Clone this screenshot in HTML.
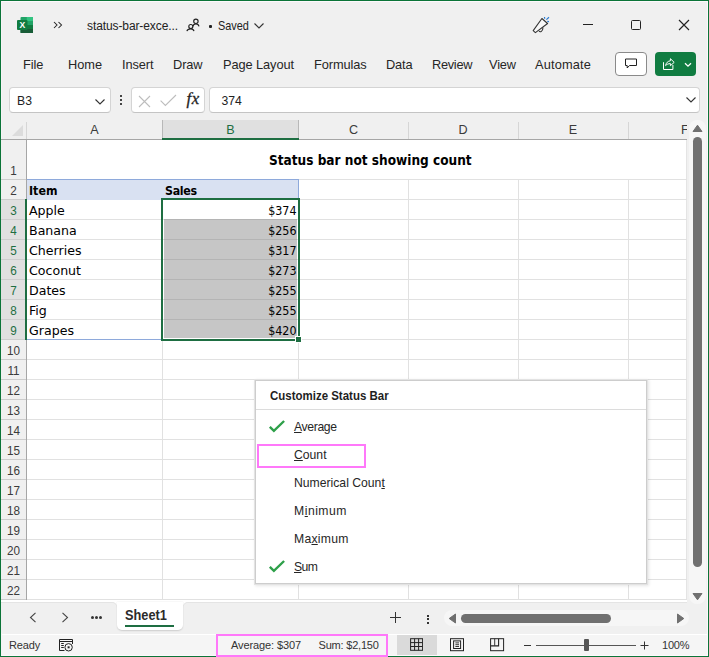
<!DOCTYPE html>
<html lang="en"><head><meta charset="utf-8"><title>status-bar-excel</title>
<style>
*{box-sizing:border-box;margin:0;padding:0}
html,body{width:709px;height:657px;overflow:hidden;background:#f0f0f0}
body{position:relative;font-family:"Liberation Sans",sans-serif;font-size:13px;color:#242424}
.a{position:absolute}
.t{position:absolute;white-space:nowrap;line-height:16px}
.hl{position:absolute;height:1px;background:#e1e1e1}
.vl{position:absolute;width:1px;background:#e1e1e1}
u{text-decoration:underline;text-underline-offset:0.5px;text-decoration-thickness:1px}
</style></head><body>

<div class="a" style="left:0;top:0;width:709px;height:657px;border:1px solid #0b7438;"></div>
<div class="a" style="left:1px;top:1px;width:707px;height:655px;border:1px solid #fdf9fc;border-left-color:#f6f3f6"></div>
<svg class="a" style="left:17px;top:16px" width="17" height="18" viewBox="0 0 17 18">
<rect x="3.5" y="1" width="12.5" height="16" rx="1" fill="#21a366"/>
<rect x="9.75" y="1" width="6.25" height="4" fill="#33c481"/>
<rect x="3.5" y="5" width="6.25" height="4" fill="#107c41"/>
<rect x="9.75" y="5" width="6.25" height="4" fill="#21a366"/>
<rect x="3.5" y="9" width="6.25" height="4" fill="#0e6e3a"/>
<rect x="9.75" y="9" width="6.25" height="4" fill="#107c41"/>
<rect x="3.5" y="13" width="12.5" height="4" fill="#185c37"/>
<rect x="0" y="4" width="10.5" height="10" rx="1" fill="#107c41"/>
<text x="5.3" y="12.1" font-family="Liberation Sans, sans-serif" font-weight="bold" font-size="8.6" fill="#fff" text-anchor="middle">X</text>
</svg>
<svg class="a" style="left:53px;top:21px" width="10" height="8" viewBox="0 0 10 8"><path d="M1 1 L4 4 L1 7 M5.5 1 L8.5 4 L5.5 7" stroke="#222" stroke-width="1.05" fill="none"/></svg>
<div class="t" style="top:18px;font-size:12px;color:#222;letter-spacing:-0.1px;left:87px;">status-bar-exce...</div>
<svg class="a" style="left:180px;top:10px" width="30" height="30" viewBox="0 0 30 30" fill="none" stroke="#222" stroke-width="1.15">
<circle cx="15.9" cy="11.3" r="2.2"/><path d="M13 16.4 C13.3 14.6 14.5 13.8 15.9 13.8 C17.4 13.8 18.6 14.6 19 16.4"/>
<circle cx="10.8" cy="16.5" r="2"/><path d="M6.9 21.2 C7.3 19.5 8.8 18.8 10.8 18.8 C12.6 18.8 13.6 19.6 14 21.2"/>
</svg>
<div class="a" style="left:209px;top:25px;width:3px;height:3px;background:#222;border-radius:1px"></div>
<div class="t" style="top:18px;font-size:12.4px;color:#222;left:218px;transform:scaleX(.88);transform-origin:0 0;">Saved</div>
<svg class="a" style="left:252.5px;top:21.5px" width="12" height="8" viewBox="0 0 12 8"><path d="M1.5 1.5 L6 6 L10.5 1.5" stroke="#333" stroke-width="1.1" fill="none"/></svg>
<svg class="a" style="left:525px;top:10px" width="40" height="30" viewBox="0 0 40 30" fill="none">
<path d="M8.2 20.6 L16.9 8.5 L22.6 13.5 L10.4 22.6 Z" stroke="#333" stroke-width="1.1" stroke-linejoin="round" fill="#f8f8f8"/>
<path d="M14.1 21 C14.8 22.3 17.8 22.2 18 17.4" stroke="#333" stroke-width="1.1"/>
<path d="M19.5 7 L19.7 8.7 M21.4 9.6 L24 7.2 M22.3 11.3 L24 11.6" stroke="#2b7cd3" stroke-width="1.2"/>
</svg>
<div class="a" style="left:583px;top:24px;width:10px;height:1px;background:#222"></div>
<div class="a" style="left:631px;top:20px;width:10px;height:10px;border:1px solid #222;border-radius:1.5px"></div>
<svg class="a" style="left:678px;top:19px" width="12" height="12" viewBox="0 0 12 12"><path d="M1 1 L11 11 M11 1 L1 11" stroke="#222" stroke-width="1.15"/></svg>
<div class="t" style="top:57px;font-size:12.8px;color:#262626;letter-spacing:-0.1px;left:23px;">File</div>
<div class="t" style="top:57px;font-size:12.8px;color:#262626;letter-spacing:0px;left:68px;">Home</div>
<div class="t" style="top:57px;font-size:12.8px;color:#262626;letter-spacing:-0.1px;left:122px;">Insert</div>
<div class="t" style="top:57px;font-size:12.8px;color:#262626;letter-spacing:-0.1px;left:173px;">Draw</div>
<div class="t" style="top:57px;font-size:12.8px;color:#262626;letter-spacing:-0.08px;left:223px;">Page Layout</div>
<div class="t" style="top:57px;font-size:12.8px;color:#262626;letter-spacing:-0.1px;left:314px;">Formulas</div>
<div class="t" style="top:57px;font-size:12.8px;color:#262626;letter-spacing:-0.15px;left:386px;">Data</div>
<div class="t" style="top:57px;font-size:12.8px;color:#262626;letter-spacing:-0.3px;left:432px;">Review</div>
<div class="t" style="top:57px;font-size:12.8px;color:#262626;letter-spacing:-0.15px;left:489px;">View</div>
<div class="t" style="top:57px;font-size:12.8px;color:#262626;letter-spacing:0.15px;left:535px;">Automate</div>
<div class="a" style="left:615px;top:52px;width:32px;height:24px;border:1px solid #8a8a8a;border-radius:4px;background:#fff"></div>
<svg class="a" style="left:624px;top:58px" width="14" height="12" viewBox="0 0 14 12"><path d="M1.5 1 H12.5 V7.5 H5.5 L3.2 10 V7.5 H1.5 Z" stroke="#222" stroke-width="1" fill="none"/></svg>
<div class="a" style="left:655px;top:52px;width:41px;height:24px;border-radius:4px;background:#107c41"></div>
<svg class="a" style="left:661px;top:57px" width="14" height="14" viewBox="0 0 14 14" fill="none" stroke="#fff" stroke-width="1">
<path d="M2.5 5.2 V12.5 H11.9 V8"/><path d="M4.6 8.6 C5 5.8 7 4 9.4 3.8 V1.7 L13.2 5.4 L9.4 8.7 V6.6 C7.4 6.6 5.8 7.3 4.6 8.6 Z" stroke-linejoin="round"/></svg>
<svg class="a" style="left:683.5px;top:61.8px" width="8" height="6" viewBox="0 0 8 6"><path d="M1 1.2 L4 4.2 L7 1.2" stroke="#fff" stroke-width="1.3" fill="none"/></svg>
<div class="a" style="left:9px;top:87px;width:102px;height:26px;border:1px solid #d4d4d4;border-bottom-color:#c4c4c4;border-radius:4px;background:#fff"></div>
<div class="t" style="top:93px;font-size:12.2px;color:#222;left:17px;">B3</div>
<svg class="a" style="left:94px;top:98px" width="12" height="8" viewBox="0 0 12 8"><path d="M1.5 1.5 L6 6 L10.5 1.5" stroke="#333" stroke-width="1.1" fill="none"/></svg>
<div class="a" style="left:120px;top:95px;width:2px;height:2px;background:#444"></div>
<div class="a" style="left:120px;top:99px;width:2px;height:2px;background:#444"></div>
<div class="a" style="left:120px;top:103px;width:2px;height:2px;background:#444"></div>
<div class="a" style="left:131px;top:87px;width:74px;height:26px;border:1px solid #d4d4d4;border-bottom-color:#c4c4c4;border-radius:4px;background:#fff"></div>
<svg class="a" style="left:137.5px;top:94.5px" width="13" height="13" viewBox="0 0 13 13"><path d="M1 1 L12 12 M12 1 L1 12" stroke="#bdbdbd" stroke-width="1.1"/></svg>
<svg class="a" style="left:160px;top:93.5px" width="17" height="13" viewBox="0 0 17 13"><path d="M0.6 6.6 L5.4 11.4 L16 1" stroke="#bdbdbd" stroke-width="1.1" fill="none"/></svg>
<div class="t" style="top:91px;font-size:16.8px;color:#222;font-family:'Liberation Serif',serif;letter-spacing:0.6px;left:186.5px;font-style:italic;-webkit-text-stroke:0.3px #222;">fx</div>
<div class="a" style="left:209px;top:87px;width:491px;height:26px;border:1px solid #d4d4d4;border-bottom-color:#c4c4c4;border-radius:4px;background:#fff"></div>
<div class="t" style="top:93px;font-size:12.2px;color:#222;left:221.5px;">374</div>
<svg class="a" style="left:685px;top:96px" width="12" height="8" viewBox="0 0 12 8"><path d="M1.5 1.5 L6 6 L10.5 1.5" stroke="#333" stroke-width="1.1" fill="none"/></svg>
<div class="a" style="left:27px;top:140px;width:660px;height:461px;background:#fff;border-right:1px solid #e4e4e4"></div>
<svg class="a" style="left:11px;top:124px" width="13" height="13" viewBox="0 0 13 13"><path d="M12 1 V12 H1 Z" fill="#dcdcdc"/></svg>
<div class="a" style="left:162px;top:120px;width:137px;height:20px;background:#e0e0e0"></div>
<div class="t" style="top:122px;font-size:12.6px;color:#3b3b3b;left:27px;width:135px;text-align:center;">A</div>
<div class="t" style="top:122px;font-size:12.6px;color:#1e6e42;left:162px;width:137px;text-align:center;">B</div>
<div class="t" style="top:122px;font-size:12.6px;color:#3b3b3b;left:299px;width:109px;text-align:center;">C</div>
<div class="t" style="top:122px;font-size:12.6px;color:#3b3b3b;left:408px;width:110px;text-align:center;">D</div>
<div class="t" style="top:122px;font-size:12.6px;color:#3b3b3b;left:518px;width:110px;text-align:center;">E</div>
<div class="t" style="top:122px;font-size:12.6px;color:#3b3b3b;left:681px;width:6px;overflow:hidden;">F</div>
<div class="vl" style="left:26px;top:122px;height:17px;background:#d6d6d6"></div>
<div class="vl" style="left:162px;top:120px;height:19px;background:#b8b8b8"></div>
<div class="vl" style="left:298px;top:120px;height:19px;background:#b8b8b8"></div>
<div class="vl" style="left:408px;top:122px;height:17px;background:#d6d6d6"></div>
<div class="vl" style="left:518px;top:122px;height:17px;background:#d6d6d6"></div>
<div class="vl" style="left:628px;top:122px;height:17px;background:#d6d6d6"></div>
<div class="a" style="left:1px;top:139px;width:686px;height:1px;background:#a6a6a6"></div>
<div class="a" style="left:162px;top:138px;width:137px;height:2px;background:#1e6e42"></div>
<div class="a" style="left:1px;top:140px;width:25px;height:461px;background:#f0f0f0"></div>
<div class="a" style="left:1px;top:200px;width:25px;height:140px;background:#e0e0e0"></div>
<div class="hl" style="left:1px;top:179px;width:25px;background:#cdcdcd"></div>
<div class="hl" style="left:1px;top:199px;width:25px;background:#cdcdcd"></div>
<div class="hl" style="left:1px;top:219px;width:25px;background:#cdcdcd"></div>
<div class="hl" style="left:1px;top:239px;width:25px;background:#cdcdcd"></div>
<div class="hl" style="left:1px;top:259px;width:25px;background:#cdcdcd"></div>
<div class="hl" style="left:1px;top:279px;width:25px;background:#cdcdcd"></div>
<div class="hl" style="left:1px;top:299px;width:25px;background:#cdcdcd"></div>
<div class="hl" style="left:1px;top:319px;width:25px;background:#cdcdcd"></div>
<div class="hl" style="left:1px;top:339px;width:25px;background:#cdcdcd"></div>
<div class="hl" style="left:1px;top:359px;width:25px;background:#cdcdcd"></div>
<div class="hl" style="left:1px;top:379px;width:25px;background:#cdcdcd"></div>
<div class="hl" style="left:1px;top:399px;width:25px;background:#cdcdcd"></div>
<div class="hl" style="left:1px;top:419px;width:25px;background:#cdcdcd"></div>
<div class="hl" style="left:1px;top:439px;width:25px;background:#cdcdcd"></div>
<div class="hl" style="left:1px;top:459px;width:25px;background:#cdcdcd"></div>
<div class="hl" style="left:1px;top:479px;width:25px;background:#cdcdcd"></div>
<div class="hl" style="left:1px;top:499px;width:25px;background:#cdcdcd"></div>
<div class="hl" style="left:1px;top:519px;width:25px;background:#cdcdcd"></div>
<div class="hl" style="left:1px;top:539px;width:25px;background:#cdcdcd"></div>
<div class="hl" style="left:1px;top:559px;width:25px;background:#cdcdcd"></div>
<div class="hl" style="left:1px;top:579px;width:25px;background:#cdcdcd"></div>
<div class="hl" style="left:1px;top:599px;width:25px;background:#cdcdcd"></div>
<div class="a" style="left:26px;top:140px;width:1px;height:461px;background:#a6a6a6"></div>
<div class="a" style="left:25px;top:199px;width:2px;height:141px;background:#1e6e42"></div>
<div class="t" style="top:163px;font-size:13px;color:#3b3b3b;left:1px;width:25px;text-align:center;transform:scaleX(.9);">1</div>
<div class="t" style="top:183px;font-size:13px;color:#3b3b3b;left:1px;width:25px;text-align:center;transform:scaleX(.9);">2</div>
<div class="t" style="top:203px;font-size:13px;color:#1e6e42;left:1px;width:25px;text-align:center;transform:scaleX(.9);">3</div>
<div class="t" style="top:223px;font-size:13px;color:#1e6e42;left:1px;width:25px;text-align:center;transform:scaleX(.9);">4</div>
<div class="t" style="top:243px;font-size:13px;color:#1e6e42;left:1px;width:25px;text-align:center;transform:scaleX(.9);">5</div>
<div class="t" style="top:263px;font-size:13px;color:#1e6e42;left:1px;width:25px;text-align:center;transform:scaleX(.9);">6</div>
<div class="t" style="top:283px;font-size:13px;color:#1e6e42;left:1px;width:25px;text-align:center;transform:scaleX(.9);">7</div>
<div class="t" style="top:303px;font-size:13px;color:#1e6e42;left:1px;width:25px;text-align:center;transform:scaleX(.9);">8</div>
<div class="t" style="top:323px;font-size:13px;color:#1e6e42;left:1px;width:25px;text-align:center;transform:scaleX(.9);">9</div>
<div class="t" style="top:343px;font-size:13px;color:#3b3b3b;left:1px;width:25px;text-align:center;transform:scaleX(.9);">10</div>
<div class="t" style="top:363px;font-size:13px;color:#3b3b3b;left:1px;width:25px;text-align:center;transform:scaleX(.9);">11</div>
<div class="t" style="top:383px;font-size:13px;color:#3b3b3b;left:1px;width:25px;text-align:center;transform:scaleX(.9);">12</div>
<div class="t" style="top:403px;font-size:13px;color:#3b3b3b;left:1px;width:25px;text-align:center;transform:scaleX(.9);">13</div>
<div class="t" style="top:423px;font-size:13px;color:#3b3b3b;left:1px;width:25px;text-align:center;transform:scaleX(.9);">14</div>
<div class="t" style="top:443px;font-size:13px;color:#3b3b3b;left:1px;width:25px;text-align:center;transform:scaleX(.9);">15</div>
<div class="t" style="top:463px;font-size:13px;color:#3b3b3b;left:1px;width:25px;text-align:center;transform:scaleX(.9);">16</div>
<div class="t" style="top:483px;font-size:13px;color:#3b3b3b;left:1px;width:25px;text-align:center;transform:scaleX(.9);">17</div>
<div class="t" style="top:503px;font-size:13px;color:#3b3b3b;left:1px;width:25px;text-align:center;transform:scaleX(.9);">18</div>
<div class="t" style="top:523px;font-size:13px;color:#3b3b3b;left:1px;width:25px;text-align:center;transform:scaleX(.9);">19</div>
<div class="t" style="top:543px;font-size:13px;color:#3b3b3b;left:1px;width:25px;text-align:center;transform:scaleX(.9);">20</div>
<div class="t" style="top:563px;font-size:13px;color:#3b3b3b;left:1px;width:25px;text-align:center;transform:scaleX(.9);">21</div>
<div class="t" style="top:583px;font-size:13px;color:#3b3b3b;left:1px;width:25px;text-align:center;transform:scaleX(.9);">22</div>
<div class="hl" style="left:27px;top:179px;width:660px"></div>
<div class="hl" style="left:27px;top:199px;width:660px"></div>
<div class="hl" style="left:27px;top:219px;width:660px"></div>
<div class="hl" style="left:27px;top:239px;width:660px"></div>
<div class="hl" style="left:27px;top:259px;width:660px"></div>
<div class="hl" style="left:27px;top:279px;width:660px"></div>
<div class="hl" style="left:27px;top:299px;width:660px"></div>
<div class="hl" style="left:27px;top:319px;width:660px"></div>
<div class="hl" style="left:27px;top:339px;width:660px"></div>
<div class="hl" style="left:27px;top:359px;width:660px"></div>
<div class="hl" style="left:27px;top:379px;width:660px"></div>
<div class="hl" style="left:27px;top:399px;width:660px"></div>
<div class="hl" style="left:27px;top:419px;width:660px"></div>
<div class="hl" style="left:27px;top:439px;width:660px"></div>
<div class="hl" style="left:27px;top:459px;width:660px"></div>
<div class="hl" style="left:27px;top:479px;width:660px"></div>
<div class="hl" style="left:27px;top:499px;width:660px"></div>
<div class="hl" style="left:27px;top:519px;width:660px"></div>
<div class="hl" style="left:27px;top:539px;width:660px"></div>
<div class="hl" style="left:27px;top:559px;width:660px"></div>
<div class="hl" style="left:27px;top:579px;width:660px"></div>
<div class="hl" style="left:27px;top:599px;width:660px"></div>
<div class="vl" style="left:162px;top:180px;height:421px"></div>
<div class="vl" style="left:298px;top:180px;height:421px"></div>
<div class="vl" style="left:408px;top:180px;height:421px"></div>
<div class="vl" style="left:518px;top:180px;height:421px"></div>
<div class="vl" style="left:628px;top:180px;height:421px"></div>
<div class="a" style="left:27px;top:179px;width:272px;height:21px;background:#d9e1f2;border-top:1px solid #8ea9db;border-right:1px solid #8ea9db"></div>
<div class="a" style="left:27px;top:339px;width:136px;height:1px;background:#8ea9db"></div>
<div class="a" style="left:164px;top:219px;width:133px;height:119px;background:#c6c6c6"></div>
<div class="hl" style="left:164px;top:219px;width:133px;background:#b4b4b4"></div>
<div class="hl" style="left:164px;top:239px;width:133px;background:#b4b4b4"></div>
<div class="hl" style="left:164px;top:259px;width:133px;background:#b4b4b4"></div>
<div class="hl" style="left:164px;top:279px;width:133px;background:#b4b4b4"></div>
<div class="hl" style="left:164px;top:299px;width:133px;background:#b4b4b4"></div>
<div class="hl" style="left:164px;top:319px;width:133px;background:#b4b4b4"></div>
<div class="a" style="left:161px;top:198px;width:139px;height:143px;border:2px solid #1e6e42"></div>
<div class="a" style="left:295px;top:336px;width:7px;height:7px;background:#1e6e42;border:1px solid #fff"></div>
<div class="t" style="top:152px;font-size:13.5px;color:#000;font-family:'DejaVu Sans Condensed','DejaVu Sans',sans-serif;font-weight:bold;left:269px;">Status bar not showing count</div>
<div class="t" style="top:183px;font-size:12.3px;color:#000;font-family:'DejaVu Sans Condensed','DejaVu Sans',sans-serif;font-weight:bold;left:29px;">Item</div>
<div class="t" style="top:183px;font-size:12.3px;color:#000;font-family:'DejaVu Sans Condensed','DejaVu Sans',sans-serif;font-weight:bold;letter-spacing:-0.3px;left:165px;">Sales</div>
<div class="t" style="top:203px;font-size:12.6px;color:#000;font-family:'DejaVu Sans','Liberation Sans',sans-serif;left:29px;">Apple</div>
<div class="t" style="top:203px;font-size:12.4px;color:#000;font-family:'DejaVu Sans Condensed','DejaVu Sans',sans-serif;right:412.5px;">$374</div>
<div class="t" style="top:223px;font-size:12.6px;color:#000;font-family:'DejaVu Sans','Liberation Sans',sans-serif;left:29px;">Banana</div>
<div class="t" style="top:223px;font-size:12.4px;color:#000;font-family:'DejaVu Sans Condensed','DejaVu Sans',sans-serif;right:412.5px;">$256</div>
<div class="t" style="top:243px;font-size:12.6px;color:#000;font-family:'DejaVu Sans','Liberation Sans',sans-serif;left:29px;">Cherries</div>
<div class="t" style="top:243px;font-size:12.4px;color:#000;font-family:'DejaVu Sans Condensed','DejaVu Sans',sans-serif;right:412.5px;">$317</div>
<div class="t" style="top:263px;font-size:12.6px;color:#000;font-family:'DejaVu Sans','Liberation Sans',sans-serif;left:29px;">Coconut</div>
<div class="t" style="top:263px;font-size:12.4px;color:#000;font-family:'DejaVu Sans Condensed','DejaVu Sans',sans-serif;right:412.5px;">$273</div>
<div class="t" style="top:283px;font-size:12.6px;color:#000;font-family:'DejaVu Sans','Liberation Sans',sans-serif;left:29px;">Dates</div>
<div class="t" style="top:283px;font-size:12.4px;color:#000;font-family:'DejaVu Sans Condensed','DejaVu Sans',sans-serif;right:412.5px;">$255</div>
<div class="t" style="top:303px;font-size:12.6px;color:#000;font-family:'DejaVu Sans','Liberation Sans',sans-serif;left:29px;">Fig</div>
<div class="t" style="top:303px;font-size:12.4px;color:#000;font-family:'DejaVu Sans Condensed','DejaVu Sans',sans-serif;right:412.5px;">$255</div>
<div class="t" style="top:323px;font-size:12.6px;color:#000;font-family:'DejaVu Sans','Liberation Sans',sans-serif;left:29px;">Grapes</div>
<div class="t" style="top:323px;font-size:12.4px;color:#000;font-family:'DejaVu Sans Condensed','DejaVu Sans',sans-serif;right:412.5px;">$420</div>
<div class="a" style="left:689px;top:120px;width:17px;height:484px;border-radius:8px;background:#f6f6f6"></div>
<svg class="a" style="left:692px;top:124px" width="11" height="9" viewBox="0 0 11 9"><path d="M5.5 1.2 L10 7.5 H1 Z" fill="#707070" stroke="#707070" stroke-width="1" stroke-linejoin="round"/></svg>
<div class="a" style="left:693px;top:137px;width:9px;height:430px;border-radius:4.5px;background:#707070"></div>
<svg class="a" style="left:692px;top:592px" width="11" height="9" viewBox="0 0 11 9"><path d="M5.5 7.8 L10 1.5 H1 Z" fill="#707070" stroke="#707070" stroke-width="1" stroke-linejoin="round"/></svg>
<div class="a" style="left:1px;top:600px;width:686px;height:8px;background:#fff"></div>
<div class="a" style="left:1px;top:602px;width:116px;height:31px;background:#f0f0f0;border-top-right-radius:5px;box-shadow:inset 0 1px 0 #e4e4e4"></div>
<div class="a" style="left:183px;top:602px;width:504px;height:31px;background:#f0f0f0;border-top-left-radius:5px;box-shadow:inset 0 1px 0 #e4e4e4"></div>
<svg class="a" style="left:29px;top:612px" width="8" height="11" viewBox="0 0 8 11"><path d="M6.5 0.8 L1.5 5.5 L6.5 10.2" stroke="#444" stroke-width="1.1" fill="none"/></svg>
<svg class="a" style="left:61px;top:612px" width="8" height="11" viewBox="0 0 8 11"><path d="M1.5 0.8 L6.5 5.5 L1.5 10.2" stroke="#444" stroke-width="1.1" fill="none"/></svg>
<div class="a" style="left:91px;top:616px;width:3px;height:3px;background:#333;border-radius:1.5px"></div>
<div class="a" style="left:95px;top:616px;width:3px;height:3px;background:#333;border-radius:1.5px"></div>
<div class="a" style="left:99px;top:616px;width:3px;height:3px;background:#333;border-radius:1.5px"></div>
<div class="a" style="left:117px;top:602px;width:66px;height:28px;background:#fff;border-radius:0 0 5px 5px;box-shadow:0 0.5px 1.5px rgba(0,0,0,.14)"></div>
<div class="t" style="top:608px;font-size:13.8px;color:#2b2b2b;font-weight:bold;left:125px;transform:scaleX(.925);transform-origin:0 0;">Sheet1</div>
<div class="a" style="left:125px;top:625px;width:49px;height:2px;background:#1e6e42"></div>
<svg class="a" style="left:389px;top:611px" width="13" height="13" viewBox="0 0 13 13"><path d="M6.5 1 V12 M1 6.5 H12" stroke="#333" stroke-width="1"/></svg>
<div class="a" style="left:427px;top:614.5px;width:2px;height:2px;background:#333"></div>
<div class="a" style="left:427px;top:618.2px;width:2px;height:2px;background:#333"></div>
<div class="a" style="left:427px;top:622px;width:2px;height:2px;background:#333"></div>
<div class="a" style="left:444px;top:610px;width:245px;height:16px;border-radius:8px;background:#f6f6f6"></div>
<svg class="a" style="left:448px;top:613px" width="9" height="11" viewBox="0 0 9 11"><path d="M1.2 5.5 L7.5 1 V10 Z" fill="#707070" stroke="#707070" stroke-width="1" stroke-linejoin="round"/></svg>
<div class="a" style="left:461px;top:614px;width:150px;height:9px;border-radius:4.5px;background:#707070"></div>
<svg class="a" style="left:676px;top:613px" width="9" height="11" viewBox="0 0 9 11"><path d="M7.8 5.5 L1.5 1 V10 Z" fill="#707070" stroke="#707070" stroke-width="1" stroke-linejoin="round"/></svg>
<div class="a" style="left:2px;top:634px;width:705px;height:21px;background:#f5f5f5;border-top:1px solid #fff"></div>
<div class="t" style="top:637px;font-size:11px;color:#333;letter-spacing:-0.15px;left:9px;">Ready</div>
<svg class="a" style="left:58px;top:638px" width="16" height="14" viewBox="0 0 16 14" fill="none" stroke="#222" stroke-width="1">
<path d="M6.5 12.5 H1.5 V1.5 H14.5 V6"/><path d="M1.5 3.5 H14.5"/><path d="M3.2 5.5 H5.8 M3.2 7.5 H5.8 M3.2 9.5 H5.8"/><circle cx="10.6" cy="9.3" r="3.7"/><rect x="9.6" y="8.3" width="2" height="2" fill="#222" stroke="none"/></svg>
<div class="a" style="left:216px;top:634px;width:172px;height:23px;border:2px solid #ff78fa;background:#f5f5f5"></div>
<div class="t" style="top:637px;font-size:11px;color:#333;letter-spacing:-0.1px;left:231px;">Average: $307</div>
<div class="t" style="top:637px;font-size:11px;color:#333;letter-spacing:-0.2px;left:318.5px;">Sum: $2,150</div>
<div class="a" style="left:397px;top:635px;width:40px;height:20px;background:#dadada"></div>
<svg class="a" style="left:410px;top:638px" width="13" height="13" viewBox="0 0 13 13" fill="none" stroke="#222" stroke-width="1">
<rect x="0.6" y="0.7" width="12" height="11.6"/><path d="M4.6 0.7 V12.3 M8.6 0.7 V12.3 M0.6 4.6 H12.6 M0.6 8.5 H12.6"/></svg>
<svg class="a" style="left:450px;top:638px" width="15" height="14" viewBox="0 0 15 14" fill="none" stroke="#222" stroke-width="1">
<rect x="0.5" y="0.7" width="13" height="12"/><rect x="3.6" y="2.9" width="7" height="7.6"/><path d="M5.4 4.9 H9 M5.4 6.7 H9 M5.4 8.5 H9" stroke-width=".9"/></svg>
<svg class="a" style="left:490px;top:638px" width="15" height="14" viewBox="0 0 15 14" fill="none" stroke="#222" stroke-width="1">
<rect x="0.6" y="0.7" width="13" height="12"/><path d="M8.6 0.7 V7.9 H0.6" stroke-width="1.1"/><path d="M4.7 0.7 V7.6" stroke-width=".9"/></svg>
<div class="a" style="left:524px;top:645px;width:7px;height:1px;background:#333"></div>
<div class="a" style="left:536px;top:645px;width:100px;height:1px;background:#555"></div>
<div class="a" style="left:584px;top:639px;width:5px;height:12px;background:#555;border-radius:1px"></div>
<svg class="a" style="left:640px;top:641px" width="9" height="9" viewBox="0 0 9 9"><path d="M4.5 0.5 V8.5 M0.5 4.5 H8.5" stroke="#333" stroke-width="1"/></svg>
<div class="t" style="top:637px;font-size:11px;color:#333;letter-spacing:-0.2px;left:662px;">100%</div>
<div class="a" style="left:254px;top:379px;width:394px;height:206px;border:1px solid #e3e3e3;box-shadow:1px 1px 3px rgba(0,0,0,.10)"></div>
<div class="a" style="left:255px;top:380px;width:392px;height:204px;background:#fff;border:1px solid #cdcdcd"></div>
<div class="t" style="top:388px;font-size:12.5px;color:#1f1f1f;font-weight:bold;left:270px;transform:scaleX(.918);transform-origin:0 0;">Customize Status Bar</div>
<div class="a" style="left:256px;top:409px;width:390px;height:1px;background:#dcdcdc"></div>
<div class="t" style="top:419px;font-size:12.2px;color:#262626;letter-spacing:-0.35px;left:294px;"><u>A</u>verage</div>
<svg class="a" style="left:268px;top:420px" width="18" height="13" viewBox="0 0 18 13"><path d="M1.8 6.9 L5.9 10.9 L16.1 1" stroke="#2ea04a" stroke-width="2.4" fill="none"/></svg>
<div class="t" style="top:447px;font-size:12.2px;color:#262626;letter-spacing:0px;left:294px;"><u>C</u>ount</div>
<div class="t" style="top:475px;font-size:12.2px;color:#262626;letter-spacing:0px;left:294px;">Numerical Coun<u>t</u></div>
<div class="t" style="top:503px;font-size:12.2px;color:#262626;letter-spacing:0.5px;left:294px;">M<u>i</u>nimum</div>
<div class="t" style="top:531px;font-size:12.2px;color:#262626;letter-spacing:0.25px;left:294px;">Ma<u>x</u>imum</div>
<div class="t" style="top:559px;font-size:12.2px;color:#262626;letter-spacing:-0.6px;left:294px;"><u>S</u>um</div>
<svg class="a" style="left:268px;top:560px" width="18" height="13" viewBox="0 0 18 13"><path d="M1.8 6.9 L5.9 10.9 L16.1 1" stroke="#2ea04a" stroke-width="2.4" fill="none"/></svg>
<div class="a" style="left:257px;top:444px;width:109px;height:24px;border:2px solid #ff78fa"></div>
</body></html>
